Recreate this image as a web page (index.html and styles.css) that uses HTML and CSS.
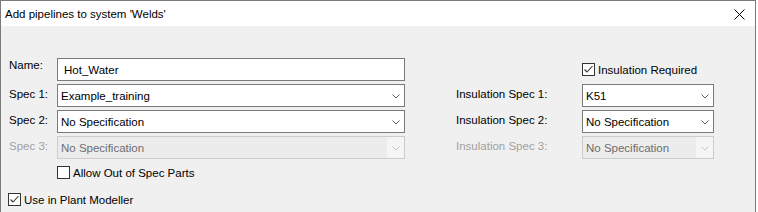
FILE: index.html
```html
<!DOCTYPE html>
<html>
<head>
  <title>Add pipelines to system</title>
  <link rel="stylesheet" href="styles.css">
</head>
<body>
  <div class="window">
    <div class="titlebar">
      <span class="title">Add pipelines to system 'Welds'</span>
      <svg class="close" width="11" height="11" viewBox="0 0 11 11">
        <path d="M0.5 0.5 L10.5 10.5 M10.5 0.5 L0.5 10.5" stroke="#000" stroke-width="1" fill="none"/>
      </svg>
    </div>

    <div class="content">
      <div class="form">
        <label class="lbl lbl-name">Name:</label>
        <div class="field textbox">Hot_Water</div>
        <div></div>
        <div></div>
        <div class="check">
          <svg class="box" width="13" height="13" viewBox="0 0 13 13">
            <rect x="0.5" y="0.5" width="12" height="12" fill="#fff" stroke="#333"/>
            <polyline points="2.5,6.5 5,9 10.5,3" fill="none" stroke="#333" stroke-width="1.1"/>
          </svg>
          <span>Insulation Required</span>
        </div>

        <label class="lbl">Spec 1:</label>
        <div class="field combo"><span class="val">Example_training</span><span class="arrow"><svg width="8" height="5" viewBox="0 0 8 5"><polyline points="0.5,0.5 4,4 7.5,0.5" fill="none" stroke="#606060"/></svg></span></div>
        <div></div>
        <label class="lbl">Insulation Spec 1:</label>
        <div class="field combo"><span class="val">K51</span><span class="arrow"><svg width="8" height="5" viewBox="0 0 8 5"><polyline points="0.5,0.5 4,4 7.5,0.5" fill="none" stroke="#606060"/></svg></span></div>

        <label class="lbl">Spec 2:</label>
        <div class="field combo"><span class="val">No Specification</span><span class="arrow"><svg width="8" height="5" viewBox="0 0 8 5"><polyline points="0.5,0.5 4,4 7.5,0.5" fill="none" stroke="#606060"/></svg></span></div>
        <div></div>
        <label class="lbl">Insulation Spec 2:</label>
        <div class="field combo"><span class="val">No Specification</span><span class="arrow"><svg width="8" height="5" viewBox="0 0 8 5"><polyline points="0.5,0.5 4,4 7.5,0.5" fill="none" stroke="#606060"/></svg></span></div>

        <label class="lbl disabled">Spec 3:</label>
        <div class="field combo off"><span class="val">No Specification</span><span class="arrow"><svg width="8" height="5" viewBox="0 0 8 5"><polyline points="0.5,0.5 4,4 7.5,0.5" fill="none" stroke="#c4c4c4"/></svg></span></div>
        <div></div>
        <label class="lbl disabled">Insulation Spec 3:</label>
        <div class="field combo off"><span class="val">No Specification</span><span class="arrow"><svg width="8" height="5" viewBox="0 0 8 5"><polyline points="0.5,0.5 4,4 7.5,0.5" fill="none" stroke="#c4c4c4"/></svg></span></div>
      </div>

      <div class="check allow">
        <svg class="box" width="13" height="13" viewBox="0 0 13 13">
          <rect x="0.5" y="0.5" width="12" height="12" fill="#fff" stroke="#333"/>
        </svg>
        <span>Allow Out of Spec Parts</span>
      </div>

      <div class="check plant">
        <svg class="box" width="13" height="13" viewBox="0 0 13 13">
          <rect x="0.5" y="0.5" width="12" height="12" fill="#fff" stroke="#333"/>
          <polyline points="2.5,6.5 5,9 10.5,3" fill="none" stroke="#333" stroke-width="1.1"/>
        </svg>
        <span>Use in Plant Modeller</span>
      </div>
    </div>
  </div>
</body>
</html>
```

FILE: styles.css
```css
body {
  margin: 0;
  background: #fff;
  font-family: "Liberation Sans", Arial, sans-serif;
  font-size: 11.5px;
  color: #000;
  overflow: hidden;
}

.window {
  width: 754px;
  height: 211px;
  border: 1px solid #7a7a7a;
  border-bottom: none;
  background: #f0f0f0;
  overflow: hidden;
}

.titlebar {
  height: 25px;
  background: #fff;
  display: flex;
  align-items: center;
  justify-content: space-between;
  padding: 0 10px 0 4px;
}
.title {
  font-size: 11.5px;
  margin-top: 1px;
}
.close {
  display: block;
  margin-top: 1px;
}

.content {
  padding: 32px 0 0 8px;
}

.form {
  display: grid;
  grid-template-columns: 48px 348px 51px 126px 132px;
  grid-auto-rows: 23px;
  row-gap: 3px;
}

.lbl {
  padding-top: 4px;
  white-space: nowrap;
}
.lbl-name {
  padding-top: 1px;
}
.disabled {
  color: #a0a0a0;
}

.field {
  box-sizing: border-box;
  border: 1px solid #7a7a7a;
  background: #fff;
  display: flex;
  align-items: center;
}
.textbox {
  padding-left: 6px;
}
.combo .val {
  flex: 1;
  padding-left: 3px;
}
.combo .arrow {
  width: 17px;
  align-self: stretch;
  display: flex;
  align-items: center;
  justify-content: center;
}
.combo .arrow svg {
  display: block;
  margin-top: 1px;
}
.combo.off {
  border-color: #cccccc;
  background: #ececec;
  color: #6d6d6d;
}
.combo.off .arrow {
  background: #f5f5f5;
}

.check {
  display: flex;
  align-items: center;
  height: 23px;
}
.check .box {
  display: block;
  flex: none;
  margin-right: 3px;
}
.allow {
  height: 13px;
  margin: 7px 0 0 48px;
}
.plant {
  height: 13px;
  margin: 14px 0 0 -1px;
}
```
